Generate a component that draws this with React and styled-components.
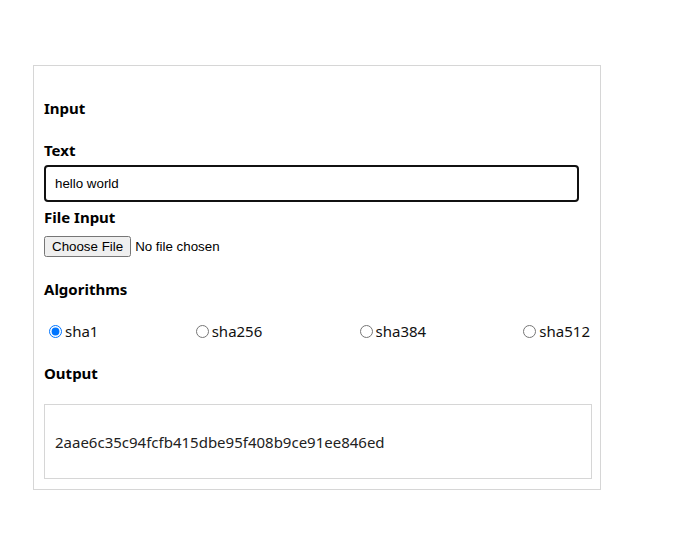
import React, { useState } from "react";
import styled, { createGlobalStyle } from "styled-components";

const ALGORITHMS = ["sha1", "sha256", "sha384", "sha512"];

const App = () => {
  const [text, setText] = useState("hello world");
  const [algo, setAlgo] = useState("sha1");

  return (
    <>
      <GlobalStyle />
      <Card>
        <Heading>Input</Heading>
        <Heading $mt={22}>Text</Heading>
        <TextField
          type="text"
          value={text}
          onChange={(e) => setText(e.target.value)}
        />
        <Heading $mt={5}>File Input</Heading>
        <FileField type="file" />
        <Heading $mt={22}>Algorithms</Heading>
        <RadioRow>
          {ALGORITHMS.map((name) => (
            <RadioLabel key={name}>
              <input
                type="radio"
                name="algo"
                checked={algo === name}
                onChange={() => setAlgo(name)}
              />
              {name}
            </RadioLabel>
          ))}
        </RadioRow>
        <Heading $mt={22}>Output</Heading>
        <OutputBox>2aae6c35c94fcfb415dbe95f408b9ce91ee846ed</OutputBox>
      </Card>
    </>
  );
};

const GlobalStyle = createGlobalStyle`
  body {
    margin: 0;
    background: #fff;
    font-family: "Noto Sans", "Open Sans", sans-serif;
    color: #000;
  }
`;

const Card = styled.div`
  display: flex;
  flex-direction: column;
  align-items: flex-start;
  box-sizing: border-box;
  width: 568px;
  margin: 65px 0 0 33px;
  padding: 32px 10px 10px;
  border: 1px solid #d6d6d6;
`;

const Heading = styled.h3`
  margin: ${(p) => p.$mt || 0}px 0 0;
  font-size: 15px;
  line-height: 20px;
  font-weight: 700;
`;

const TextField = styled.input`
  box-sizing: border-box;
  width: 535px;
  height: 37px;
  margin-top: 5px;
  padding: 0 9px;
  border: 2px solid #111;
  border-radius: 4px;
  outline: none;
  font-family: "Liberation Sans", Arial, sans-serif;
  font-size: 13.33px;
  color: #000;
`;

const FileField = styled.input`
  margin-top: 9px;
  font-family: "Liberation Sans", Arial, sans-serif;
  font-size: 13.33px;
`;

const RadioRow = styled.div`
  display: flex;
  justify-content: space-between;
  align-self: stretch;
  margin-top: 22px;
`;

const RadioLabel = styled.label`
  display: flex;
  align-items: center;
  font-size: 15px;
  line-height: 20px;
  color: #111;

  input {
    margin: 0 3px 0 5px;
    accent-color: #0075ff;
  }
`;

const OutputBox = styled.div`
  display: flex;
  align-items: center;
  align-self: stretch;
  box-sizing: border-box;
  height: 75px;
  margin: 21px -2px 0 0;
  padding: 0 10px;
  border: 1px solid #d6d6d6;
  font-size: 15px;
  color: #222;
`;

export default App;
